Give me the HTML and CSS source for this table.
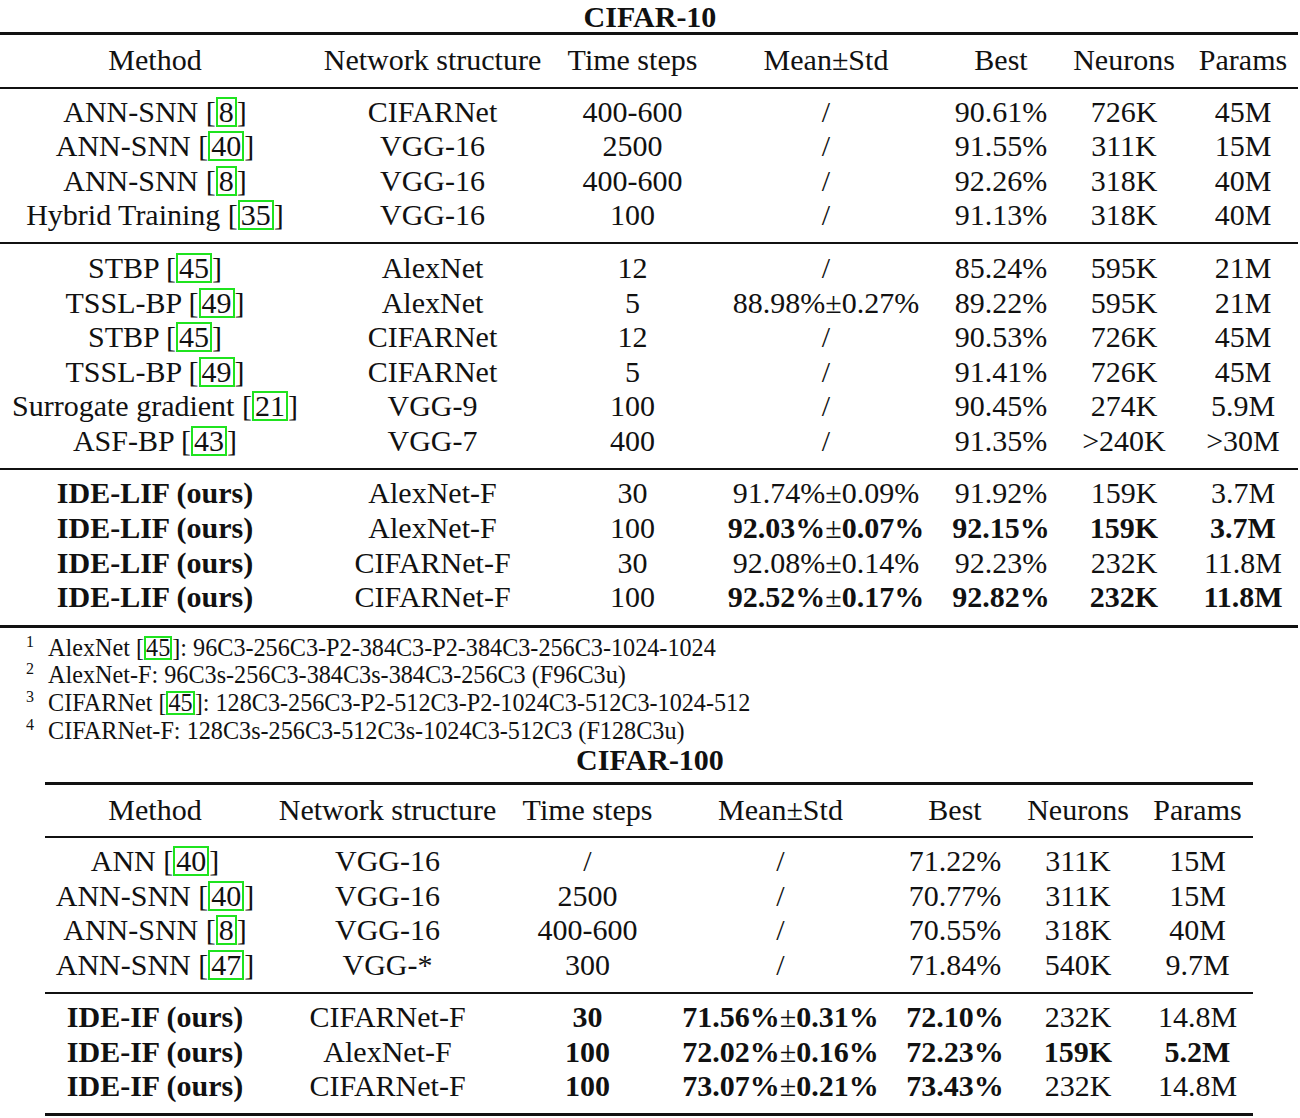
FILE: index.html
```html
<!DOCTYPE html>
<html lang="en">
<head>
<meta charset="utf-8">
<title>CIFAR results</title>
<link rel="stylesheet" href="styles.css">
</head>
<body>
<div class="page">
  <div class="caption cap1">CIFAR-10</div>
  <table class="results t1">
    <colgroup>
      <col style="width:310px"><col style="width:245px"><col style="width:155px"><col style="width:232px"><col style="width:118px"><col style="width:128px"><col style="width:110px">
    </colgroup>
    <thead>
      <tr><th>Method</th><th>Network structure</th><th>Time steps</th><th>Mean±Std</th><th>Best</th><th>Neurons</th><th>Params</th></tr>
    </thead>
    <tbody class="g1">
      <tr><td>ANN-SNN [<span class="cite">8</span>]</td><td>CIFARNet</td><td>400-600</td><td>/</td><td>90.61%</td><td>726K</td><td>45M</td></tr>
      <tr><td>ANN-SNN [<span class="cite">40</span>]</td><td>VGG-16</td><td>2500</td><td>/</td><td>91.55%</td><td>311K</td><td>15M</td></tr>
      <tr><td>ANN-SNN [<span class="cite">8</span>]</td><td>VGG-16</td><td>400-600</td><td>/</td><td>92.26%</td><td>318K</td><td>40M</td></tr>
      <tr><td>Hybrid Training [<span class="cite">35</span>]</td><td>VGG-16</td><td>100</td><td>/</td><td>91.13%</td><td>318K</td><td>40M</td></tr>
    </tbody>
    <tbody class="g2">
      <tr><td>STBP [<span class="cite">45</span>]</td><td>AlexNet</td><td>12</td><td>/</td><td>85.24%</td><td>595K</td><td>21M</td></tr>
      <tr><td>TSSL-BP [<span class="cite">49</span>]</td><td>AlexNet</td><td>5</td><td>88.98%±0.27%</td><td>89.22%</td><td>595K</td><td>21M</td></tr>
      <tr><td>STBP [<span class="cite">45</span>]</td><td>CIFARNet</td><td>12</td><td>/</td><td>90.53%</td><td>726K</td><td>45M</td></tr>
      <tr><td>TSSL-BP [<span class="cite">49</span>]</td><td>CIFARNet</td><td>5</td><td>/</td><td>91.41%</td><td>726K</td><td>45M</td></tr>
      <tr><td>Surrogate gradient [<span class="cite">21</span>]</td><td>VGG-9</td><td>100</td><td>/</td><td>90.45%</td><td>274K</td><td>5.9M</td></tr>
      <tr><td>ASF-BP [<span class="cite">43</span>]</td><td>VGG-7</td><td>400</td><td>/</td><td>91.35%</td><td>&gt;240K</td><td>&gt;30M</td></tr>
    </tbody>
    <tbody class="g3">
      <tr><td><b>IDE-LIF (ours)</b></td><td>AlexNet-F</td><td>30</td><td>91.74%±0.09%</td><td>91.92%</td><td>159K</td><td>3.7M</td></tr>
      <tr><td><b>IDE-LIF (ours)</b></td><td>AlexNet-F</td><td>100</td><td><b>92.03%</b>±<b>0.07%</b></td><td><b>92.15%</b></td><td><b>159K</b></td><td><b>3.7M</b></td></tr>
      <tr><td><b>IDE-LIF (ours)</b></td><td>CIFARNet-F</td><td>30</td><td>92.08%±0.14%</td><td>92.23%</td><td>232K</td><td>11.8M</td></tr>
      <tr><td><b>IDE-LIF (ours)</b></td><td>CIFARNet-F</td><td>100</td><td><b>92.52%</b>±<b>0.17%</b></td><td><b>92.82%</b></td><td><b>232K</b></td><td><b>11.8M</b></td></tr>
    </tbody>
  </table>
  <div class="notes">
    <div class="note"><sup class="mark">1</sup>AlexNet [<span class="cite small">45</span>]: 96C3-256C3-P2-384C3-P2-384C3-256C3-1024-1024</div>
    <div class="note"><sup class="mark">2</sup>AlexNet-F: 96C3s-256C3-384C3s-384C3-256C3 (F96C3u)</div>
    <div class="note"><sup class="mark">3</sup>CIFARNet [<span class="cite small">45</span>]: 128C3-256C3-P2-512C3-P2-1024C3-512C3-1024-512</div>
    <div class="note"><sup class="mark">4</sup>CIFARNet-F: 128C3s-256C3-512C3s-1024C3-512C3 (F128C3u)</div>
  </div>
  <div class="caption cap2">CIFAR-100</div>
  <table class="results t2">
    <colgroup>
      <col style="width:220px"><col style="width:245px"><col style="width:155px"><col style="width:231px"><col style="width:118px"><col style="width:128px"><col style="width:111px">
    </colgroup>
    <thead>
      <tr><th>Method</th><th>Network structure</th><th>Time steps</th><th>Mean±Std</th><th>Best</th><th>Neurons</th><th>Params</th></tr>
    </thead>
    <tbody class="g1">
      <tr><td>ANN [<span class="cite">40</span>]</td><td>VGG-16</td><td>/</td><td>/</td><td>71.22%</td><td>311K</td><td>15M</td></tr>
      <tr><td>ANN-SNN [<span class="cite">40</span>]</td><td>VGG-16</td><td>2500</td><td>/</td><td>70.77%</td><td>311K</td><td>15M</td></tr>
      <tr><td>ANN-SNN [<span class="cite">8</span>]</td><td>VGG-16</td><td>400-600</td><td>/</td><td>70.55%</td><td>318K</td><td>40M</td></tr>
      <tr><td>ANN-SNN [<span class="cite">47</span>]</td><td>VGG-*</td><td>300</td><td>/</td><td>71.84%</td><td>540K</td><td>9.7M</td></tr>
    </tbody>
    <tbody class="g3">
      <tr><td><b>IDE-IF (ours)</b></td><td>CIFARNet-F</td><td><b>30</b></td><td><b>71.56%</b>±<b>0.31%</b></td><td><b>72.10%</b></td><td>232K</td><td>14.8M</td></tr>
      <tr><td><b>IDE-IF (ours)</b></td><td>AlexNet-F</td><td><b>100</b></td><td><b>72.02%</b>±<b>0.16%</b></td><td><b>72.23%</b></td><td><b>159K</b></td><td><b>5.2M</b></td></tr>
      <tr><td><b>IDE-IF (ours)</b></td><td>CIFARNet-F</td><td><b>100</b></td><td><b>73.07%</b>±<b>0.21%</b></td><td><b>73.43%</b></td><td>232K</td><td>14.8M</td></tr>
    </tbody>
  </table>
</div>
</body>
</html>
```

FILE: styles.css
```css
html, body {
  margin: 0;
  padding: 0;
  background: #ffffff;
}

.page {
  width: 1300px;
  font-family: "Liberation Serif", "Times New Roman", serif;
  color: #111111;
  font-size: 30px;
}

.caption {
  text-align: center;
  font-weight: bold;
  width: 1300px;
}

.cap1 {
  line-height: 34.5px;
  height: 32px;
}

.cap2 {
  line-height: 28px;
  height: 28px;
  margin-top: 1px;
  margin-bottom: 8px;
}

.results {
  border-collapse: separate;
  border-spacing: 0;
  table-layout: fixed;
  border-top: 3px solid #111111;
  border-bottom: 3px solid #111111;
}

.t1 {
  width: 1298px;
}

.t2 {
  width: 1208px;
  margin-left: 45px;
}

.results th,
.results td {
  padding: 0;
  text-align: center;
  white-space: nowrap;
  line-height: 34.6px;
  font-weight: normal;
}

.results b {
  font-weight: bold;
}

.results th {
  padding-top: 8px;
  padding-bottom: 9px;
  border-bottom: 2px solid #111111;
}

.results tbody tr:first-child td {
  padding-top: 6px;
}

.results tbody tr:last-child td {
  padding-bottom: 9px;
}

.results .g2 tr:first-child td,
.results .g3 tr:first-child td {
  border-top: 2px solid #111111;
}

.results .g2 tr:first-child td {
  padding-top: 7px;
}

.results .g2 tr:last-child td {
  padding-bottom: 9.4px;
}

.results .g3 tr:first-child td {
  padding-top: 6.5px;
}

.t1 .g3 tr:last-child td {
  padding-bottom: 10px;
}

.cite {
  display: inline-block;
  border: 2px solid #1fe31f;
  line-height: 26px;
  padding: 0 1px;
}

.cite.small {
  line-height: 20px;
  padding: 0;
}

.notes {
  margin-top: 6px;
  font-size: 24.2px;
}

.note {
  line-height: 27.7px;
  height: 27.7px;
  padding-left: 26px;
  white-space: nowrap;
}

.mark {
  display: inline-block;
  width: 22px;
  font-size: 16px;
  line-height: 1;
  vertical-align: 9px;
}
```
